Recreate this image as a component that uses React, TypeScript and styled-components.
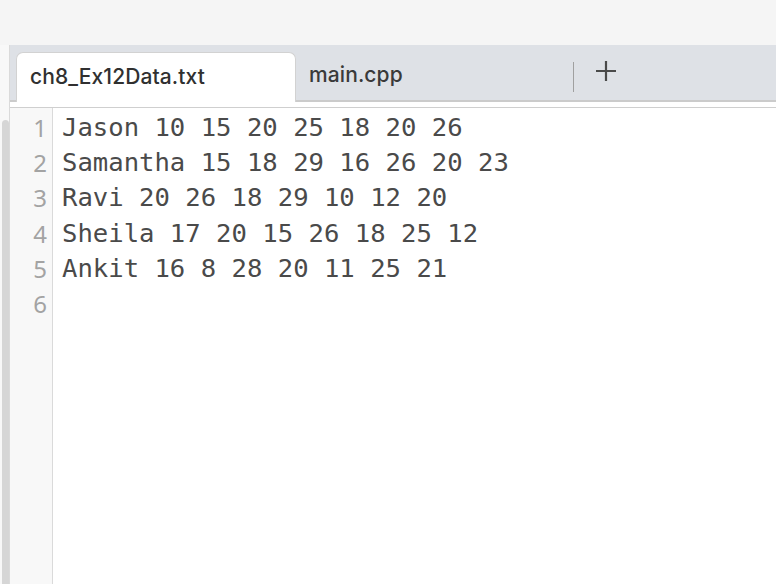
import React from "react";
import styled, { createGlobalStyle } from "styled-components";

const Global = createGlobalStyle`
  html, body { margin: 0; padding: 0; background: #f5f5f5; }
  * { box-sizing: border-box; }
`;

const Page = styled.div`
  width: 776px;
  height: 584px;
  display: flex;
  flex-direction: column;
  overflow: hidden;
  background: #f5f5f5;
`;

const TopBar = styled.div`
  height: 45px;
  flex: none;
  background: #f5f5f5;
`;

const Body = styled.div`
  flex: 1;
  display: flex;
  min-height: 0;
`;

const LeftRail = styled.div`
  width: 10px;
  flex: none;
  display: flex;
  flex-direction: column;
  background: #f8f8f8;
  border-right: 1px solid #dadada;
  padding: 75px 0 0 2px;
`;

const Thumb = styled.div`
  flex: 1;
  width: 7px;
  background: #d6d6d6;
  border-radius: 4px 4px 0 0;
`;

const Pane = styled.div`
  flex: 1;
  display: flex;
  flex-direction: column;
  background: #fff;
`;

const TabBar = styled.div`
  height: 57px;
  flex: none;
  display: flex;
  align-items: flex-end;
  padding-left: 6px;
  background: #dee1e6;
  border-bottom: 2px solid #cbcbcb;
`;

const Tab = styled.div<{ $active?: boolean }>`
  height: ${(p) => (p.$active ? "50px" : "48px")};
  width: ${(p) => (p.$active ? "280px" : "277px")};
  display: flex;
  align-items: center;
  padding: 0 0 ${(p) => (p.$active ? "2px" : "3px")} 13px;
  font-family: Inter, "Noto Sans", sans-serif;
  font-weight: 500;
  font-size: 21px;
  letter-spacing: 0.1px;
  color: ${(p) => (p.$active ? "#303030" : "#3a3a3a")};
  background: ${(p) => (p.$active ? "#fff" : "transparent")};
  border: ${(p) => (p.$active ? "1px solid #d2d2d2" : "none")};
  border-bottom: none;
  border-radius: 7px 7px 0 0;
  margin-bottom: ${(p) => (p.$active ? "-2px" : "0")};
`;

const Sep = styled.div`
  width: 1px;
  height: 30px;
  background: #a0a0a0;
  align-self: center;
  margin-top: 8px;
`;

const AddButton = styled.div`
  width: 64px;
  height: 48px;
  display: flex;
  align-items: center;
  justify-content: center;
  padding-bottom: 10px;
`;

const Spacer = styled.div`
  height: 6px;
  flex: none;
  background: #fff;
  border-bottom: 1px solid #cfcfcf;
`;

const Editor = styled.div`
  flex: 1;
  display: flex;
  min-height: 0;
`;

const Gutter = styled.div`
  width: 43px;
  flex: none;
  background: #f8f8f8;
  border-right: 1px solid #dadada;
  padding-top: 2px;
  text-align: right;
  padding-right: 5px;
`;

const LineNo = styled.div`
  height: 35.2px;
  line-height: 35.2px;
  font-family: "Noto Sans", Inter, sans-serif;
  font-size: 24px;
  color: #a3a3a3;
`;

const Code = styled.div`
  flex: 1;
  padding: 2px 0 0 9px;
  background: #fff;
`;

const Line = styled.div`
  height: 35.2px;
  line-height: 35.2px;
  font-family: "DejaVu Sans Mono", "Liberation Mono", monospace;
  font-size: 25.6px;
  color: #4a4a4a;
  white-space: pre;
`;

const lines = [
  "Jason 10 15 20 25 18 20 26",
  "Samantha 15 18 29 16 26 20 23",
  "Ravi 20 26 18 29 10 12 20",
  "Sheila 17 20 15 26 18 25 12",
  "Ankit 16 8 28 20 11 25 21",
  "",
];

export default function App() {
  return (
    <>
      <Global />
      <Page>
        <TopBar />
        <Body>
          <LeftRail>
            <Thumb />
          </LeftRail>
          <Pane>
            <TabBar>
              <Tab $active>ch8_Ex12Data.txt</Tab>
              <Tab>main.cpp</Tab>
              <Sep />
              <AddButton>
                <svg width="22" height="22" viewBox="0 0 22 22">
                  <path d="M11 1v20M1 11h20" stroke="#4a4a4a" strokeWidth="2.2" />
                </svg>
              </AddButton>
            </TabBar>
            <Spacer />
            <Editor>
              <Gutter>
                {lines.map((_, i) => (
                  <LineNo key={i}>{i + 1}</LineNo>
                ))}
              </Gutter>
              <Code>
                {lines.map((l, i) => (
                  <Line key={i}>{l || " "}</Line>
                ))}
              </Code>
            </Editor>
          </Pane>
        </Body>
      </Page>
    </>
  );
}
